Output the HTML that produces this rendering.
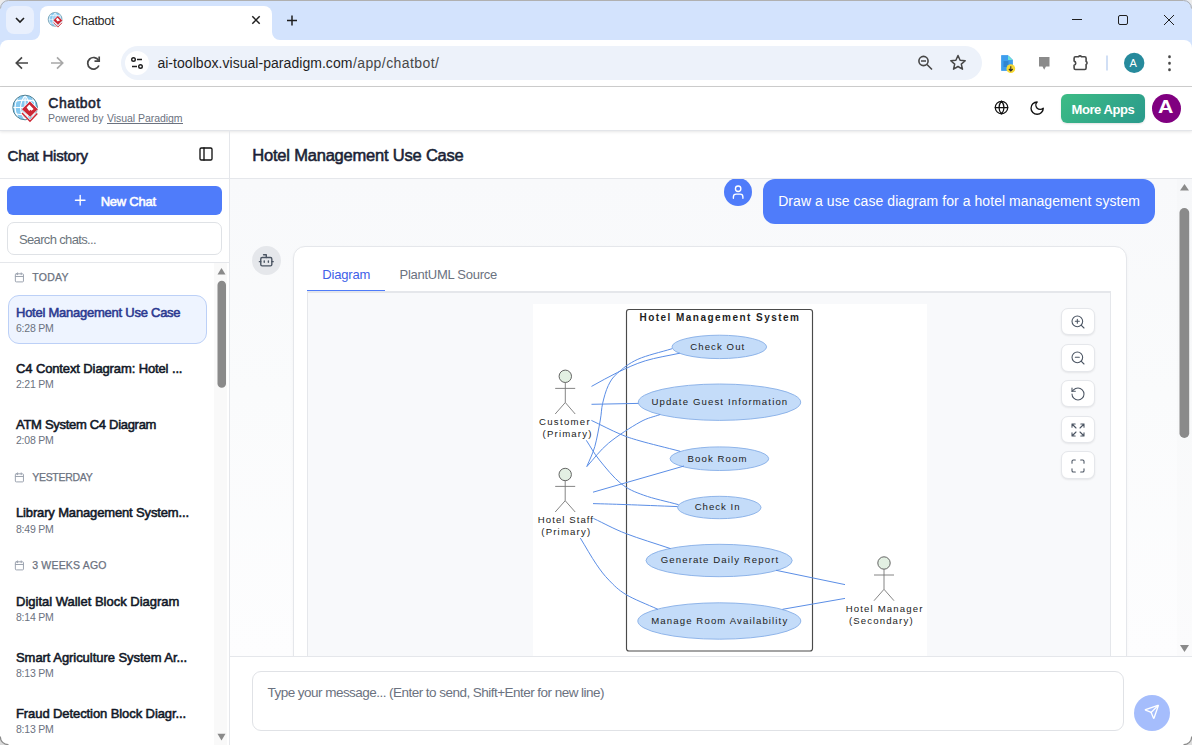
<!DOCTYPE html>
<html><head><meta charset="utf-8">
<style>
*{box-sizing:border-box;margin:0;padding:0}
html,body{width:1192px;height:745px;overflow:hidden;background:#ffffff;font-family:"Liberation Sans",sans-serif}
.a{position:absolute}
.t{position:absolute;line-height:1;white-space:nowrap}
svg{position:absolute;overflow:visible}
</style></head><body>
<!-- ============ BROWSER CHROME ============ -->
<div class="a" style="left:0;top:0;width:1192px;height:50px;background:#d3e3fd"></div>
<!-- dropdown btn -->
<div class="a" style="left:6px;top:6px;width:28px;height:28px;border-radius:8px;background:#e9f0fd"></div>
<svg style="left:0;top:0" width="40" height="40"><path d="M16 18 L20 22 L24 18" fill="none" stroke="#1f1f1f" stroke-width="1.6"/></svg>
<!-- active tab -->
<div class="a" style="left:40px;top:6px;width:232px;height:34px;background:#fff;border-radius:8px 8px 0 0"></div>
<svg style="left:0;top:0" width="300" height="40"><path d="M32 40 A8 8 0 0 0 40 32 L40 40 Z" fill="#fff"/><path d="M272 32 A8 8 0 0 0 280 40 L272 40 Z" fill="#fff"/></svg>
<!-- favicon -->
<svg style="left:48.2px;top:12.2px" width="15" height="15" viewBox="12.5 94.5 26.5 26.5">
 <circle cx="25.1" cy="107.5" r="12.2" fill="#86c9f0"/>
 <g fill="none" stroke="#fff" stroke-width="1.1">
  <path d="M13 107.5 H37"/><path d="M14.5 101.3 Q25 99 35.5 101.3"/><path d="M14.5 113.7 Q25 116 35.5 113.7"/>
  <path d="M25.1 95.3 V119.7"/><path d="M25.1 95.3 Q16 107.5 25.1 119.7"/><path d="M25.1 95.3 Q34 107.5 25.1 119.7"/>
  <path d="M18 97.5 Q12 107.5 18 117.5"/><path d="M32.2 97.5 Q38 107.5 32.2 117.5"/>
 </g>
 <circle cx="25.1" cy="107.5" r="12.3" fill="none" stroke="#4f7f92" stroke-width="1"/>
 <path d="M21.3 111.9 L30 120.9 L37.5 113.2" fill="none" stroke="#fff" stroke-width="2.6"/>
 <path d="M22 113 L30 121.2 L37.3 113.6" fill="none" stroke="#cc2735" stroke-width="1.5"/>
 <path d="M21.5 109.2 L29.9 101 L38.2 109.3 L30.2 117.3 Z" fill="#cc2735" stroke="#fff" stroke-width="0.8"/>
 <path d="M26.6 107.4 L29.3 104.6 L33.6 108.9 L31.6 110.8 L30.5 109.8 L29.2 111.1 Z" fill="#fff"/>
</svg>
<!-- tab close -->
<svg style="left:0;top:0" width="300" height="40"><path d="M252.3 16.3 L259.7 23.7 M259.7 16.3 L252.3 23.7" stroke="#1f1f1f" stroke-width="1.5"/>
<path d="M292 15.5 V25.5 M287 20.5 H297" stroke="#1f1f1f" stroke-width="1.5"/></svg>
<!-- window controls -->
<svg style="left:1050px;top:0" width="142" height="40">
 <path d="M22 19.5 H32" stroke="#1f1f1f" stroke-width="1"/>
 <rect x="68.5" y="15.5" width="9" height="9" rx="1.5" fill="none" stroke="#1f1f1f" stroke-width="1"/>
 <path d="M114 15 L124 25 M124 15 L114 25" stroke="#1f1f1f" stroke-width="1"/>
</svg>
<!-- toolbar -->
<div class="a" style="left:0;top:40px;width:1192px;height:47px;background:#fff;border-radius:8px 8px 0 0;border-bottom:1px solid #cfcfcf"></div>
<svg style="left:0;top:40px" width="120" height="46">
 <path d="M28 23 H16.5 M22 17.3 L16.3 23 L22 28.7" fill="none" stroke="#474747" stroke-width="1.7"/>
 <path d="M51 23 H62.5 M57 17.3 L62.7 23 L57 28.7" fill="none" stroke="#a8a8a8" stroke-width="1.7"/>
 <path d="M98.6 20.5 A5.8 5.8 0 1 0 98.9 25.5" fill="none" stroke="#474747" stroke-width="1.7"/>
 <path d="M99.2 16.5 V21.2 H94.5" fill="none" stroke="#474747" stroke-width="1.7"/>
</svg>
<div class="a" style="left:121px;top:46px;width:861px;height:34px;border-radius:17px;background:#edf2fa"></div>
<div class="a" style="left:125px;top:51px;width:24px;height:24px;border-radius:12px;background:#fff"></div>
<svg style="left:125px;top:51px" width="24" height="24">
 <circle cx="8.5" cy="8.5" r="1.8" fill="none" stroke="#1f1f1f" stroke-width="1.4"/>
 <path d="M12 8.5 H17" stroke="#1f1f1f" stroke-width="1.5"/>
 <circle cx="15.5" cy="15.5" r="1.8" fill="none" stroke="#1f1f1f" stroke-width="1.4"/>
 <path d="M7 15.5 H12" stroke="#1f1f1f" stroke-width="1.5"/>
</svg>
<svg style="left:900px;top:40px" width="292" height="46">
 <circle cx="23.5" cy="21" r="4.6" fill="none" stroke="#474747" stroke-width="1.6"/>
 <path d="M21 21 H26 M27 24.5 L32 29.5" stroke="#474747" stroke-width="1.6"/>
 <path d="M58 15.5 L60.1 20.3 L65.2 20.7 L61.3 24.1 L62.5 29.2 L58 26.5 L53.5 29.2 L54.7 24.1 L50.8 20.7 L55.9 20.3 Z" fill="none" stroke="#474747" stroke-width="1.5" stroke-linejoin="round"/>
 <!-- doc ext -->
 <path d="M101.5 15.5 H108 L112.5 20 V30.5 H101.5 Z" fill="#3e9ded" stroke="#3e9ded" stroke-width="0.8" stroke-linejoin="round"/>
 <path d="M108 15.5 L112.5 20 H108 Z" fill="#6fe3d6"/>
 <path d="M103.5 22 H108.5 M103.5 24 H108.5 M103.5 26 H107" stroke="#2166b0" stroke-width="0.9"/>
 <circle cx="110.8" cy="28.7" r="4.4" fill="#f7d934"/>
 <path d="M110.8 26.2 V30.8 M108.9 29 L110.8 30.9 L112.7 29" fill="none" stroke="#2b2b2b" stroke-width="1.1"/>
 <!-- gray bubble -->
 <path d="M139 17 H149.5 V26.5 H145.9 L144.2 29.7 L142.5 26.5 H139 Z" fill="#8a8a8a"/>
 <!-- puzzle -->
 <path d="M175.5 16.8 H178.6 A1.5 1.5 0 0 1 181.4 16.8 H184.7 Q186.1 16.8 186.1 18.2 V21.6 A1.5 1.5 0 0 1 186.1 24.4 V28.1 Q186.1 29.5 184.7 29.5 H175.5 Q174.1 29.5 174.1 28.1 V25.2 A2.1 2.1 0 0 0 174.1 21.1 V18.2 Q174.1 16.8 175.5 16.8 Z" fill="none" stroke="#474747" stroke-width="1.6" stroke-linejoin="round"/>
 <path d="M207 15.5 V30.5" stroke="#c2d4f2" stroke-width="1.5"/>
 <circle cx="234.2" cy="22.9" r="10.2" fill="#268a9c"/>
 <path d="M269.5 16.5 V17 M269.5 23 V23.5 M269.5 29.5 V30" stroke="#474747" stroke-width="2.6" stroke-linecap="round"/>
</svg>
<div class="t" style="left:1129.5px;top:57.5px;font-size:11px;color:#fff">A</div>

<!-- ============ APP HEADER ============ -->
<div class="a" style="left:0;top:87px;width:1192px;height:44px;background:#fff;box-shadow:0 1px 3px rgba(0,0,0,0.10)"></div>
<div class="a" style="left:0;top:130px;width:1192px;height:1px;background:#e3e5e9"></div>
<svg style="left:8px;top:90px" width="34" height="34" viewBox="8 90 34 34">
 <circle cx="25.1" cy="107.5" r="12.2" fill="#86c9f0"/>
 <g fill="none" stroke="#fff" stroke-width="1.1">
  <path d="M13 107.5 H37"/><path d="M14.5 101.3 Q25 99 35.5 101.3"/><path d="M14.5 113.7 Q25 116 35.5 113.7"/>
  <path d="M25.1 95.3 V119.7"/><path d="M25.1 95.3 Q16 107.5 25.1 119.7"/><path d="M25.1 95.3 Q34 107.5 25.1 119.7"/>
  <path d="M18 97.5 Q12 107.5 18 117.5"/><path d="M32.2 97.5 Q38 107.5 32.2 117.5"/>
 </g>
 <circle cx="25.1" cy="107.5" r="12.3" fill="none" stroke="#4f7f92" stroke-width="1"/>
 <path d="M21.3 111.9 L30 120.9 L37.5 113.2" fill="none" stroke="#fff" stroke-width="2.6"/>
 <path d="M22 113 L30 121.2 L37.3 113.6" fill="none" stroke="#cc2735" stroke-width="1.5"/>
 <path d="M21.5 109.2 L29.9 101 L38.2 109.3 L30.2 117.3 Z" fill="#cc2735" stroke="#fff" stroke-width="0.8"/>
 <path d="M26.6 107.4 L29.3 104.6 L33.6 108.9 L31.6 110.8 L30.5 109.8 L29.2 111.1 Z" fill="#fff"/>
</svg>
<div class="a" style="left:106.5px;top:123px;width:76px;height:1px;background:#6b7280"></div>
<div class="t" style="left:107px;top:112.9px;font-size:10.5px;color:#6b7280;letter-spacing:-0.05px">Visual Paradigm</div>
<!-- globe / moon -->
<svg style="left:993.5px;top:100.3px" width="15" height="15" viewBox="0 0 24 24" fill="none" stroke="#111" stroke-width="2" stroke-linecap="round" stroke-linejoin="round"><circle cx="12" cy="12" r="10"/><path d="M12 2a14.5 14.5 0 0 0 0 20 14.5 14.5 0 0 0 0-20"/><path d="M2 12h20"/></svg>
<svg style="left:1028.8px;top:100.2px" width="16.3" height="16.3" viewBox="0 0 24 24" fill="none" stroke="#111" stroke-width="2" stroke-linecap="round" stroke-linejoin="round"><path d="M12 3a6 6 0 0 0 9 9 9 9 0 1 1-9-9Z"/></svg>
<div class="a" style="left:1061px;top:94px;width:84px;height:29px;border-radius:6px;background:linear-gradient(135deg,#3dbc85,#2a9a8c);box-shadow:0 1px 2px rgba(0,0,0,0.12)"></div>
<div class="a" style="left:1152px;top:94px;width:29px;height:29px;border-radius:50%;background:#800080"></div>
<div class="t" style="left:1158.2px;top:97.2px;font-size:19px;font-weight:700;color:#fff;transform:scaleX(1.12);transform-origin:0 0">A</div>

<!-- ============ SIDEBAR ============ -->
<div class="a" style="left:229px;top:130px;width:1px;height:615px;background:#e5e7eb"></div>
<div class="a" style="left:0;top:178px;width:229px;height:1px;background:#e5e7eb"></div>
<svg style="left:198px;top:146.2px" width="16" height="16" viewBox="0 0 24 24" fill="none" stroke="#111" stroke-width="2" stroke-linecap="round" stroke-linejoin="round"><rect width="18" height="18" x="3" y="3" rx="2"/><path d="M9 3v18"/></svg>
<div class="a" style="left:7px;top:186px;width:215px;height:29px;border-radius:6px;background:#4f7cfa"></div>
<svg style="left:72.1px;top:192.3px" width="16.4" height="16.4" viewBox="0 0 24 24" fill="none" stroke="#fff" stroke-width="2" stroke-linecap="round"><path d="M5 12h14"/><path d="M12 5v14"/></svg>
<div class="a" style="left:7px;top:222px;width:215px;height:33px;border-radius:7px;border:1px solid #dfe2e6;background:#fff"></div>
<div class="a" style="left:0;top:262px;width:229px;height:1px;background:#e5e7eb"></div>
<!-- sidebar scrollbar -->
<div class="a" style="left:214px;top:263px;width:13px;height:482px;background:#f9f9f9"></div>
<svg style="left:214px;top:263px" width="14" height="482">
 <path d="M3.5 11.5 L7.5 5 L11.5 11.5 Z" fill="#8a8a8a"/>
 <rect x="3.5" y="17.7" width="8.5" height="107" rx="4.25" fill="#8a8a8a"/>
 <path d="M3.5 470.7 L7.5 477.5 L11.5 470.7 Z" fill="#8a8a8a"/>
</svg>
<!-- active item -->
<div class="a" style="left:7.5px;top:295.4px;width:199.5px;height:48.5px;border-radius:11px;background:#eef4ff;border:1px solid #bcd0f7"></div>
<svg style="left:14px;top:271.7px" width="10.8" height="10.8" viewBox="0 0 24 24" fill="none" stroke="#9ca3af" stroke-width="2.2" stroke-linecap="round" stroke-linejoin="round"><path d="M8 2v4"/><path d="M16 2v4"/><rect width="18" height="18" x="3" y="4" rx="2"/><path d="M3 10h18"/></svg>
<svg style="left:14px;top:471.7px" width="10.8" height="10.8" viewBox="0 0 24 24" fill="none" stroke="#9ca3af" stroke-width="2.2" stroke-linecap="round" stroke-linejoin="round"><path d="M8 2v4"/><path d="M16 2v4"/><rect width="18" height="18" x="3" y="4" rx="2"/><path d="M3 10h18"/></svg>
<svg style="left:14px;top:559.9px" width="10.8" height="10.8" viewBox="0 0 24 24" fill="none" stroke="#9ca3af" stroke-width="2.2" stroke-linecap="round" stroke-linejoin="round"><path d="M8 2v4"/><path d="M16 2v4"/><rect width="18" height="18" x="3" y="4" rx="2"/><path d="M3 10h18"/></svg>

<!-- ============ MAIN ============ -->
<div class="a" style="left:230px;top:178px;width:962px;height:1px;background:#e5e7eb"></div>
<div class="a" style="left:230px;top:179px;width:962px;height:477px;background:linear-gradient(180deg,#f8f9fb 0%,#fafbfc 45%,#fdfdfe 100%);overflow:hidden">
 <!-- user avatar + bubble -->
 <div class="a" style="left:494px;top:-1.1px;width:28px;height:28px;border-radius:50%;background:#4f7cfa"></div>
 <svg style="left:499.8px;top:5.2px" width="16.3" height="16.3" viewBox="0 0 24 24" fill="none" stroke="#fff" stroke-width="2" stroke-linecap="round" stroke-linejoin="round"><path d="M19 21v-2a4 4 0 0 0-4-4H9a4 4 0 0 0-4 4v2"/><circle cx="12" cy="7" r="4"/></svg>
 <div class="a" style="left:533px;top:-0.3px;width:392px;height:44.8px;border-radius:12px;background:#4f7cfa"></div>
 <!-- bot avatar -->
 <div class="a" style="left:22px;top:66.8px;width:29px;height:29px;border-radius:50%;background:#e5e7eb"></div>
 <svg style="left:28.2px;top:72.7px" width="16.6" height="16.6" viewBox="0 0 24 24" fill="none" stroke="#4b5563" stroke-width="2" stroke-linecap="round" stroke-linejoin="round"><path d="M12 8V4H8"/><rect width="16" height="12" x="4" y="8" rx="2"/><path d="M2 14h2"/><path d="M20 14h2"/><path d="M15 13v2"/><path d="M9 13v2"/></svg>
 <!-- card -->
 <div class="a" style="left:62.5px;top:67px;width:834px;height:500px;border-radius:12px;background:#fff;border:1px solid #e5e7eb;box-shadow:0 1px 3px rgba(0,0,0,0.04)"></div>
 <div class="a" style="left:77px;top:113px;width:804px;height:400px;background:#f8f9fb;border:1px solid #e5e7eb;border-top:none"></div>
 <div class="a" style="left:77px;top:112px;width:804px;height:2px;background:#e5e7eb"></div>
 <div class="a" style="left:77px;top:110.6px;width:78px;height:1.6px;background:#4f7cfa"></div>
 <div class="a" style="left:303px;top:125px;width:394px;height:400px;background:#fff"></div>
 <!-- zoom buttons -->
 <div class="a" style="left:831px;top:129.3px;width:34px;height:27.2px;border-radius:7px;background:#fff;border:1px solid #e5e7eb;box-shadow:0 1px 2px rgba(0,0,0,0.08)"></div>
 <div class="a" style="left:831px;top:165.4px;width:34px;height:27.2px;border-radius:7px;background:#fff;border:1px solid #e5e7eb;box-shadow:0 1px 2px rgba(0,0,0,0.08)"></div>
 <div class="a" style="left:831px;top:200.6px;width:34px;height:27.2px;border-radius:7px;background:#fff;border:1px solid #e5e7eb;box-shadow:0 1px 2px rgba(0,0,0,0.08)"></div>
 <div class="a" style="left:831px;top:236.6px;width:34px;height:27.2px;border-radius:7px;background:#fff;border:1px solid #e5e7eb;box-shadow:0 1px 2px rgba(0,0,0,0.08)"></div>
 <div class="a" style="left:831px;top:272.4px;width:34px;height:27.2px;border-radius:7px;background:#fff;border:1px solid #e5e7eb;box-shadow:0 1px 2px rgba(0,0,0,0.08)"></div>
 <!-- main scrollbar -->
 <div class="a" style="left:947px;top:0;width:15px;height:477px;background:rgba(0,0,0,0.006)"></div>
 <svg style="left:947px;top:0" width="15" height="477">
  <path d="M3 11.4 L7.5 5 L12 11.4 Z" fill="#8a8a8a"/>
  <rect x="2.5" y="29" width="9.7" height="230" rx="4.85" fill="#8a8a8a"/>
  <path d="M3 466 L7.5 473 L12 466 Z" fill="#8a8a8a"/>
 </svg>
</div>
<!-- zoom icons (page coords) -->
<svg style="left:1070px;top:314px" width="16" height="16" viewBox="0 0 24 24" fill="none" stroke="#4b5563" stroke-width="1.6" stroke-linecap="round" stroke-linejoin="round"><circle cx="11" cy="11" r="8"/><path d="M21 21 16.65 16.65 M11 8 V14 M8 11 H14"/></svg>
<svg style="left:1070px;top:350px" width="16" height="16" viewBox="0 0 24 24" fill="none" stroke="#4b5563" stroke-width="1.6" stroke-linecap="round" stroke-linejoin="round"><circle cx="11" cy="11" r="8"/><path d="M21 21 16.65 16.65 M8 11 H14"/></svg>
<svg style="left:1070px;top:386px" width="16" height="16" viewBox="0 0 24 24" fill="none" stroke="#4b5563" stroke-width="1.6" stroke-linecap="round" stroke-linejoin="round"><path d="M3 12a9 9 0 1 0 9-9 9.75 9.75 0 0 0-6.74 2.74L3 8"/><path d="M3 3v5h5"/></svg>
<svg style="left:1070px;top:422px" width="16" height="16" viewBox="0 0 24 24" fill="none" stroke="#4b5563" stroke-width="1.6" stroke-linecap="round" stroke-linejoin="round"><path d="m21 21-6-6m6 6v-4.8m0 4.8h-4.8"/><path d="M3 16.2V21m0 0h4.8M3 21l6-6"/><path d="M21 7.8V3m0 0h-4.8M21 3l-6 6"/><path d="M3 7.8V3m0 0h4.8M3 3l6 6"/></svg>
<svg style="left:1070px;top:458px" width="16" height="16" viewBox="0 0 24 24" fill="none" stroke="#4b5563" stroke-width="1.6" stroke-linecap="round" stroke-linejoin="round"><path d="M8 3H5a2 2 0 0 0-2 2v3"/><path d="M21 8V5a2 2 0 0 0-2-2h-3"/><path d="M3 16v3a2 2 0 0 0 2 2h3"/><path d="M16 21h3a2 2 0 0 0 2-2v-3"/></svg>

<!-- ============ DIAGRAM ============ -->
<div class="a" style="left:533px;top:304px;width:394px;height:352px;overflow:hidden">
<svg style="left:-533px;top:-304px" width="1192" height="745">
 <rect x="626.5" y="309.5" width="186" height="341.5" rx="2.5" fill="none" stroke="#4a4a4a" stroke-width="1.15"/>
 <g fill="#c4dcf9" stroke="#86aee6" stroke-width="0.9">
  <ellipse cx="719.3" cy="346.9" rx="47.3" ry="11.7"/>
  <ellipse cx="719.5" cy="402.2" rx="81.2" ry="18.2"/>
  <ellipse cx="719.4" cy="458.7" rx="49.3" ry="11.8"/>
  <ellipse cx="719.3" cy="507.5" rx="41.7" ry="11.2"/>
  <ellipse cx="719.1" cy="560.5" rx="73.1" ry="16.2"/>
  <ellipse cx="719.3" cy="621" rx="81.5" ry="18.2"/>
 </g>
 <g fill="#e3f0e3" stroke="#555" stroke-width="0.9">
  <circle cx="565.3" cy="376.3" r="6.2"/>
  <circle cx="565.2" cy="474.5" r="6.2"/>
  <circle cx="884" cy="563" r="6.2"/>
 </g>
 <g fill="none" stroke="#777" stroke-width="0.9">
  <path d="M565.3 382.5 V402.5 M555.2 388.4 H575.2 M555.2 414 L565.3 402.5 L575.2 414"/>
  <path d="M565.2 480.7 V500.7 M555.2 486.4 H575.2 M555.2 512 L565.2 500.7 L575.2 512"/>
  <path d="M884 569.2 V589.3 M874 575 H894 M874 600.7 L884 589.3 L894 600.7"/>
 </g>
 <g fill="none" stroke="#5b8ee6" stroke-width="1">
  <path d="M586.8 466.6 C589.5 459.9 592.5 454.4 594.8 446.6 C597.0 438.8 599.0 427.2 600.3 420.0 C601.6 412.8 601.3 409.2 602.6 403.5 C603.9 397.8 605.8 390.6 608.3 385.5 C610.8 380.4 612.5 377.6 617.4 373.2 C622.3 368.8 628.7 363.4 637.8 359.3 C646.9 355.2 660.7 352.2 672.1 348.7"/>
  <path d="M591.5 386.4 C600.1 381.8 608.4 376.8 617.4 372.5 C626.4 368.2 634.9 364.0 645.3 360.8 C655.7 357.6 668.3 355.7 679.8 353.2"/>
  <path d="M586.8 466.6 C594.0 458.8 599.6 450.6 608.5 443.2 C617.4 435.8 631.4 426.9 640.0 422.1 C648.6 417.3 653.5 417.0 660.2 414.5"/>
  <path d="M591.4 420.4 C600.9 424.9 611.8 430.6 619.9 434.0 C628.0 437.4 630.0 438.0 640.0 440.9 C650.0 443.8 666.8 447.8 680.2 451.3"/>
  <path d="M586.3 440.3 C590.7 446.9 593.6 452.8 599.4 460.0 C605.2 467.2 613.5 477.6 620.9 483.5 C628.3 489.4 634.1 491.7 643.7 495.2 C653.3 498.7 667.0 501.5 678.6 504.7"/>
  <path d="M593.0 503.6 C604.0 503.9 611.9 504.1 626.0 504.6 C640.1 505.1 660.4 505.9 677.6 506.6"/>
  <path d="M593.4 518.4 C604.3 523.5 613.1 528.6 626.0 533.6 C638.9 538.6 655.7 543.6 670.5 548.6"/>
  <path d="M580.3 538.0 C585.6 546.7 591.5 557.2 596.3 564.2 C601.1 571.2 604.1 575.2 609.0 580.2 C613.9 585.2 617.8 589.6 625.9 594.5 C634.0 599.4 647.2 604.4 657.9 609.3"/>
  <path d="M593.0 492.2 L684 466"/>
  <path d="M776 570.3 L845 584.6"/>
  <path d="M782.5 609.3 L845 598.4"/>
  <path d="M591.5 404.3 L638.3 403.4"/>
 </g>
</svg>
</div>

<!-- ============ INPUT AREA ============ -->
<div class="a" style="left:230px;top:656px;width:962px;height:1px;background:#e5e7eb"></div>
<div class="a" style="left:252px;top:671px;width:872px;height:60px;border-radius:9px;border:1px solid #e0e2e6;background:#fff"></div>
<div class="a" style="left:1134px;top:695px;width:36px;height:36px;border-radius:50%;background:#a5bdfc"></div>
<svg style="left:1144.4px;top:704.2px" width="15.6" height="15.6" viewBox="0 0 24 24" fill="none" stroke="#fff" stroke-width="2" stroke-linecap="round" stroke-linejoin="round"><path d="M14.536 21.686a.5.5 0 0 0 .937-.024l6.5-19a.496.496 0 0 0-.635-.635l-19 6.5a.5.5 0 0 0-.024.937l7.93 3.18a2 2 0 0 1 1.112 1.11z"/><path d="m21.854 2.147-10.94 10.939"/></svg>

<svg style="left:0;top:0" width="1192" height="745">
 <path d="M0 0 H8 A8 8 0 0 0 0 8 Z" fill="#ececec"/><path d="M1192 0 H1184 A8 8 0 0 1 1192 8 Z" fill="#ececec"/>
 <path d="M0 745 H8 A8 8 0 0 1 0 737 Z" fill="#dcdcdc"/><path d="M1192 745 H1184 A8 8 0 0 0 1192 737 Z" fill="#dcdcdc"/>
 <path d="M0.5 8.5 A8 8 0 0 1 8.5 0.5 H1183.5 A8 8 0 0 1 1191.5 8.5" fill="none" stroke="#b0b0b0" stroke-width="1"/>
 <path d="M0.3 736.5 A8 8 0 0 0 8.5 744.7 M1183.5 744.7 A8 8 0 0 0 1191.7 736.5" fill="none" stroke="#8c8c8c" stroke-width="1.3"/>
</svg>
<div class="t" style="left:72.2px;top:14.62px;font-size:12.5px;font-weight:400;color:#2a2a2a;letter-spacing:-0.247px;">Chatbot</div>
<div class="t" style="left:157.4px;top:56.25px;font-size:14px;font-weight:400;color:#1f1f1f;letter-spacing:0.043px;">ai-toolbox.visual-paradigm.com</div>
<div class="t" style="left:352.9px;top:56.25px;font-size:14px;font-weight:400;color:#474747;letter-spacing:0.421px;">/app/chatbot/</div>
<div class="t" style="left:48.3px;top:96.15px;font-size:14px;font-weight:400;-webkit-text-stroke:0.55px #1e2433;color:#1e2433;letter-spacing:0.492px;">Chatbot</div>
<div class="t" style="left:48.0px;top:112.91px;font-size:10.5px;font-weight:400;color:#6b7280;letter-spacing:0.000px;">Powered by </div>
<div class="t" style="left:7.6px;top:147.80px;font-size:15px;font-weight:400;-webkit-text-stroke:0.55px #1a1f36;color:#1a1f36;letter-spacing:-0.194px;">Chat History</div>
<div class="t" style="left:100.7px;top:194.80px;font-size:13px;font-weight:400;-webkit-text-stroke:0.55px #ffffff;color:#ffffff;letter-spacing:-0.254px;">New Chat</div>
<div class="t" style="left:19.0px;top:233.00px;font-size:13px;font-weight:400;color:#6c757d;letter-spacing:-0.651px;">Search chats...</div>
<div class="t" style="left:32.2px;top:272.11px;font-size:10.5px;font-weight:400;-webkit-text-stroke:0.25px #6b7280;color:#6b7280;letter-spacing:0.274px;">TODAY</div>
<div class="t" style="left:32.2px;top:472.11px;font-size:10.5px;font-weight:400;-webkit-text-stroke:0.25px #6b7280;color:#6b7280;letter-spacing:-0.279px;">YESTERDAY</div>
<div class="t" style="left:32.2px;top:559.81px;font-size:10.5px;font-weight:400;-webkit-text-stroke:0.25px #6b7280;color:#6b7280;letter-spacing:0.194px;">3 WEEKS AGO</div>
<div class="t" style="left:16.0px;top:306.00px;font-size:13px;font-weight:400;-webkit-text-stroke:0.55px #2b3990;color:#2b3990;letter-spacing:-0.247px;">Hotel Management Use Case</div>
<div class="t" style="left:16.0px;top:323.31px;font-size:10.5px;font-weight:400;color:#6b7280;letter-spacing:-0.218px;">6:28 PM</div>
<div class="t" style="left:16.0px;top:362.00px;font-size:13px;font-weight:400;-webkit-text-stroke:0.55px #111827;color:#111827;letter-spacing:-0.118px;">C4 Context Diagram: Hotel ...</div>
<div class="t" style="left:16.0px;top:379.31px;font-size:10.5px;font-weight:400;color:#6b7280;letter-spacing:-0.218px;">2:21 PM</div>
<div class="t" style="left:16.0px;top:417.80px;font-size:13px;font-weight:400;-webkit-text-stroke:0.55px #111827;color:#111827;letter-spacing:-0.300px;">ATM System C4 Diagram</div>
<div class="t" style="left:16.0px;top:435.11px;font-size:10.5px;font-weight:400;color:#6b7280;letter-spacing:-0.218px;">2:08 PM</div>
<div class="t" style="left:16.0px;top:506.40px;font-size:13px;font-weight:400;-webkit-text-stroke:0.55px #111827;color:#111827;letter-spacing:-0.149px;">Library Management System...</div>
<div class="t" style="left:16.0px;top:523.71px;font-size:10.5px;font-weight:400;color:#6b7280;letter-spacing:-0.218px;">8:49 PM</div>
<div class="t" style="left:16.0px;top:594.60px;font-size:13px;font-weight:400;-webkit-text-stroke:0.55px #111827;color:#111827;letter-spacing:-0.004px;">Digital Wallet Block Diagram</div>
<div class="t" style="left:16.0px;top:611.91px;font-size:10.5px;font-weight:400;color:#6b7280;letter-spacing:-0.218px;">8:14 PM</div>
<div class="t" style="left:16.0px;top:650.80px;font-size:13px;font-weight:400;-webkit-text-stroke:0.55px #111827;color:#111827;letter-spacing:-0.051px;">Smart Agriculture System Ar...</div>
<div class="t" style="left:16.0px;top:668.11px;font-size:10.5px;font-weight:400;color:#6b7280;letter-spacing:-0.218px;">8:13 PM</div>
<div class="t" style="left:16.0px;top:706.60px;font-size:13px;font-weight:400;-webkit-text-stroke:0.55px #111827;color:#111827;letter-spacing:-0.086px;">Fraud Detection Block Diagr...</div>
<div class="t" style="left:16.0px;top:723.91px;font-size:10.5px;font-weight:400;color:#6b7280;letter-spacing:-0.218px;">8:13 PM</div>
<div class="t" style="left:252.3px;top:147.23px;font-size:16.5px;font-weight:400;-webkit-text-stroke:0.55px #1a1f36;color:#1a1f36;letter-spacing:-0.206px;">Hotel Management Use Case</div>
<div class="t" style="left:322.3px;top:268.30px;font-size:13px;font-weight:400;color:#4060e8;letter-spacing:-0.188px;">Diagram</div>
<div class="t" style="left:399.5px;top:268.30px;font-size:13px;font-weight:400;color:#6b7280;letter-spacing:-0.265px;">PlantUML Source</div>
<div class="t" style="left:778.2px;top:193.65px;font-size:14px;font-weight:400;color:#ffffff;letter-spacing:0.059px;">Draw a use case diagram for a hotel management system</div>
<div class="t" style="left:1071.6px;top:103.10px;font-size:13px;font-weight:700;color:#ffffff;letter-spacing:-0.450px;">More Apps</div>
<div class="t" style="left:267.5px;top:685.77px;font-size:13.5px;font-weight:400;color:#6b7280;letter-spacing:-0.534px;">Type your message... (Enter to send, Shift+Enter for new line)</div>
<div class="t" style="left:639.5px;top:312.84px;font-size:10px;font-weight:700;color:#1f1f1f;letter-spacing:1.461px;">Hotel Management System</div>
<div class="t" style="left:690.2px;top:342.47px;font-size:9.6px;font-weight:400;color:#222222;letter-spacing:1.096px;">Check Out</div>
<div class="t" style="left:651.4px;top:397.07px;font-size:9.6px;font-weight:400;color:#222222;letter-spacing:1.128px;">Update Guest Information</div>
<div class="t" style="left:687.5px;top:454.17px;font-size:9.6px;font-weight:400;color:#222222;letter-spacing:1.109px;">Book Room</div>
<div class="t" style="left:694.7px;top:502.37px;font-size:9.6px;font-weight:400;color:#222222;letter-spacing:0.989px;">Check In</div>
<div class="t" style="left:660.8px;top:555.37px;font-size:9.6px;font-weight:400;color:#222222;letter-spacing:1.092px;">Generate Daily Report</div>
<div class="t" style="left:651.2px;top:615.97px;font-size:9.6px;font-weight:400;color:#222222;letter-spacing:1.121px;">Manage Room Availability</div>
<div class="t" style="left:539.0px;top:417.07px;font-size:9.6px;font-weight:400;color:#222222;letter-spacing:1.301px;">Customer</div>
<div class="t" style="left:542.6px;top:429.37px;font-size:9.6px;font-weight:400;color:#222222;letter-spacing:1.170px;">(Primary)</div>
<div class="t" style="left:537.8px;top:514.87px;font-size:9.6px;font-weight:400;color:#222222;letter-spacing:1.058px;">Hotel Staff</div>
<div class="t" style="left:541.3px;top:527.37px;font-size:9.6px;font-weight:400;color:#222222;letter-spacing:1.170px;">(Primary)</div>
<div class="t" style="left:845.7px;top:603.77px;font-size:9.6px;font-weight:400;color:#222222;letter-spacing:1.155px;">Hotel Manager</div>
<div class="t" style="left:848.9px;top:615.97px;font-size:9.6px;font-weight:400;color:#222222;letter-spacing:1.143px;">(Secondary)</div>
</body></html>
